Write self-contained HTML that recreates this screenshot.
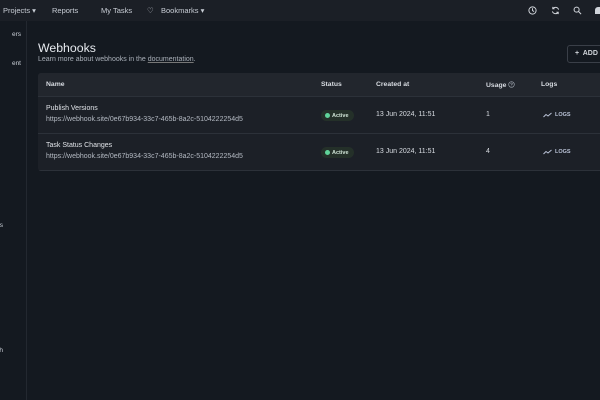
<!DOCTYPE html>
<html><head><meta charset="utf-8"><style>
*{margin:0;padding:0;box-sizing:border-box}
body{width:600px;height:400px;overflow:hidden;background:#141920;font-family:"Liberation Sans",sans-serif;color:#d8dce2;position:relative}
.top{position:absolute;left:0;top:0;width:600px;height:21px;background:#1b1f26;font-size:7.5px;color:#c9ced6}
.top span{position:absolute;top:6px}
.side{position:absolute;left:0;top:21px;width:27px;height:379px;border-right:1px solid #232830;font-size:6.5px;color:#c9ced6}
.side span{position:absolute;right:5px}
h1{position:absolute;left:38px;top:41px;font-size:12.3px;font-weight:normal;color:#e6e9ee}
.sub{position:absolute;left:38px;top:55.5px;font-size:7px;color:#aab0b9}
.sub u{text-decoration-color:#777}
.btn{position:absolute;left:567px;top:45px;width:50px;height:18px;border:1px solid #3a3f48;border-radius:3px;font-size:7px;color:#d0d4da;padding:4px 0 0 7px;font-weight:bold}
.card{position:absolute;left:38px;top:73px;width:580px;height:98px;background:#1c2027;border-radius:3px;overflow:hidden}
.hdr{height:24px;background:#22262d;border-bottom:1px solid #2c3139;font-size:6.8px;font-weight:bold;color:#d8dce2;position:relative}
.row{height:37px;border-bottom:1px solid #2c3139;position:relative;font-size:7px}
.c{position:absolute;white-space:nowrap}
.hdr .c{top:8px}
.pill{position:absolute;left:283px;top:13px;width:33px;height:11px;background:#243029;border-radius:6px;font-size:5.5px;font-weight:bold;color:#cfe3d6;padding:2.5px 0 0 11px}
.pill:before{content:"";position:absolute;left:3.5px;top:3px;width:5px;height:5px;border-radius:50%;background:#5fd39a}
.logs{color:#b9c2d6;font-size:5.5px;font-weight:bold}
.logs svg{position:absolute;left:-12px;top:0}
</style></head><body>
<div class="top">
<span style="left:3px">Projects ▾</span>
<span style="left:52px">Reports</span>
<span style="left:101px">My Tasks</span>
<span style="left:147px">♡</span>
<span style="left:161px">Bookmarks ▾</span>
<svg style="position:absolute;left:528px;top:6px" width="9" height="9" viewBox="0 0 10 10" fill="none" stroke="#d0d4da" stroke-width="1.1"><circle cx="5" cy="5" r="4"/><path d="M5 2.5V5l1.7 1.2"/></svg>
<svg style="position:absolute;left:551px;top:6px" width="9" height="9" viewBox="0 0 10 10" fill="none" stroke="#d0d4da" stroke-width="1.1"><path d="M8.5 4A3.7 3.7 0 0 0 2 3M1.5 6A3.7 3.7 0 0 0 8 7"/><path d="M2 1v2h2M8 9V7H6"/></svg>
<svg style="position:absolute;left:573px;top:6px" width="9" height="9" viewBox="0 0 10 10" fill="none" stroke="#d0d4da" stroke-width="1.1"><circle cx="4" cy="4" r="2.8"/><path d="M6 6l3 3"/></svg>
<div style="position:absolute;left:595px;top:7px;width:6px;height:7px;background:#d0d4da;border-radius:3px 0 0 0"></div>
</div>
<div class="side">
<span style="top:10px">ers</span>
<span style="top:39px">ent</span>
<span style="top:201px;right:23px">s</span>
<span style="top:326px;right:23px">h</span>
</div>
<h1>Webhooks</h1>
<div class="sub">Learn more about webhooks in the <u>documentation</u>.</div>
<div class="btn">+&nbsp; ADD</div>
<div class="card">
<div class="hdr"><span class="c" style="left:8px">Name</span><span class="c" style="left:283px">Status</span><span class="c" style="left:338px">Created at</span><span class="c" style="left:448px">Usage <svg width="7" height="7" viewBox="0 0 10 10" fill="none" stroke="#9aa1ab" stroke-width="1" style="vertical-align:-1px"><circle cx="5" cy="5" r="4"/><path d="M3.8 4a1.2 1.2 0 1 1 1.6 1.1L5 5.6V6.3M5 7.5v.3"/></svg></span><span class="c" style="left:503px">Logs</span></div>
<div class="row"><span class="c" style="left:8px;top:8px;color:#e0e3e8">Publish Versions</span><span class="c" style="left:8px;top:19px;color:#b4bac3">https://webhook.site/0e67b934-33c7-465b-8a2c-5104222254d5</span><div class="pill">Active</div><span class="c" style="left:338px;top:14px">13 Jun 2024, 11:51</span><span class="c" style="left:448px;top:14px">1</span><span class="c logs" style="left:517px;top:15px"><svg width="9" height="6" viewBox="0 0 9 6" fill="none" stroke="#b9c2d6" stroke-width="1"><path d="M0.5 5L3 2.5l2 1.5L8.5 1"/></svg>LOGS</span></div>
<div class="row"><span class="c" style="left:8px;top:8px;color:#e0e3e8">Task Status Changes</span><span class="c" style="left:8px;top:19px;color:#b4bac3">https://webhook.site/0e67b934-33c7-465b-8a2c-5104222254d5</span><div class="pill">Active</div><span class="c" style="left:338px;top:14px">13 Jun 2024, 11:51</span><span class="c" style="left:448px;top:14px">4</span><span class="c logs" style="left:517px;top:15px"><svg width="9" height="6" viewBox="0 0 9 6" fill="none" stroke="#b9c2d6" stroke-width="1"><path d="M0.5 5L3 2.5l2 1.5L8.5 1"/></svg>LOGS</span></div>
</div>
</body></html>
